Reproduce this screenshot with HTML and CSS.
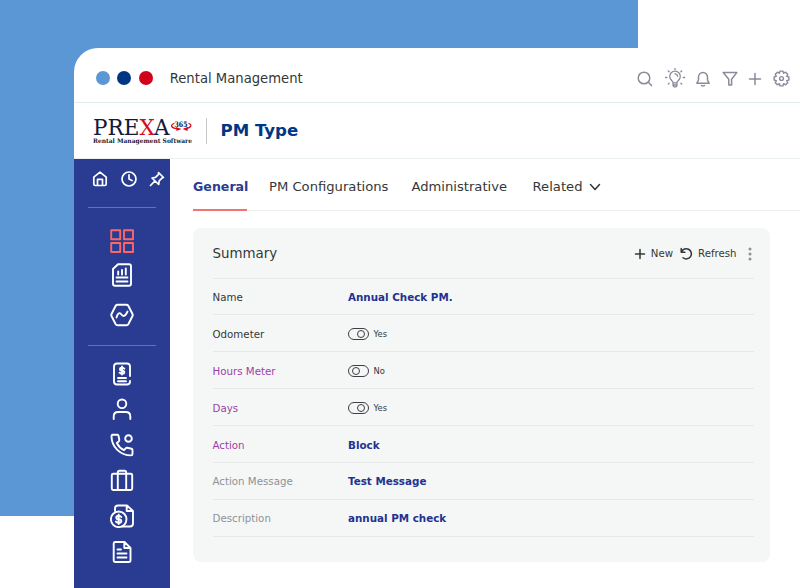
FILE: index.html
```html
<!DOCTYPE html>
<html lang="en">
<head>
    <meta charset="utf-8">
    <title>Rental Management</title>
    <link rel="stylesheet" href="styles.css">
</head>
<body>
    <div class="backdrop">
        <div class="window">
            <header class="titlebar">
                <div class="dots">
                    <span class="dot dot-light"></span>
                    <span class="dot dot-navy"></span>
                    <span class="dot dot-red"></span>
                </div>
                <span class="app-name">Rental Management</span>
                <div class="tools">
                    <svg width="16" height="16" viewBox="0 0 16 16"><circle cx="7" cy="7" r="5.8"/><path d="M11.3 11.3l3.2 3.3"/></svg>
                    <svg class="bulb" width="20" height="20" viewBox="0 0 20 20"><path d="M8 14.8c0-2-3.3-3-3.3-6.300a5.300 5.300 0 0 1 10.600 0c0 3.300-3.300 4.300-3.300 6.300zM8 15v2.500l1 1.300h2l1-1.300V15M8 17h4M10 5.800a2.700 2.700 0 0 1 2.500 2.500M10 .5v1M3.300 3l.8.8M16.700 3l-.8.8M.5 9.500h1.300M18.200 9.500h1.300M3.300 16l.8-.8M16.700 16l-.8-.8"/></svg>
                    <svg width="16" height="16" viewBox="0 0 16 16"><path d="M1.800 12.300h12.400L12.500 9V6a4.500 4.500 0 0 0-9 0v3zM6.500 14.500q1.500 1 3 0"/></svg>
                    <svg width="16" height="16" viewBox="0 0 16 16"><path d="M1.200 1.600h13.600L9.600 8.200V14H6.800V8.200z"/></svg>
                    <svg width="14" height="14" viewBox="0 0 14 14"><path d="M7 1.500v11M1.500 7h11"/></svg>
                    <svg width="17" height="17" viewBox="0 0 18 18"><path d="M7.400 1.200h3.200l.6 2.200 2.100-1.100 2.300 2.300-1.100 2.100 2.300.7v3.200l-2.300.6 1.100 2.200-2.300 2.300-2.100-1.200-.6 2.300H7.400l-.6-2.300-2.100 1.200-2.300-2.300 1.100-2.200-2.300-.6V7.400l2.300-.7-1.100-2.100 2.300-2.300 2.100 1.100z"/><circle cx="9" cy="9" r="2"/></svg>
                </div>
            </header>

            <div class="brandbar">
                <svg class="logo" width="100" height="38" viewBox="0 -5 100 38">
                    <text class="logo-name" x="0" y="18" textLength="76.500" lengthAdjust="spacingAndGlyphs">PRE<tspan class="logo-x">X</tspan>A</text>
                    <text class="logo-365" x="81.500" y="9.500" textLength="13" lengthAdjust="spacingAndGlyphs">365</text>
                    <path class="logo-swoosh" d="M81 6.500c-4 1.500-3 4.500 3 5.200M96 6.500c3.500 1.500 2 4.500-4 5.200"/>
                    <path class="logo-arrow" d="M83 10l5.500 2-5 1.900zM95 10l-5.500 2 5 1.900z"/>
                    <text class="logo-tag" x="0" y="26.300" textLength="99" lengthAdjust="spacingAndGlyphs">Rental Management Software</text>
                </svg>
                <h1>PM Type</h1>
            </div>

            <div class="main">
                <nav class="sidebar">
                    <div class="shortcuts">
                        <svg width="16" height="16" viewBox="0 0 16 16"><path d="M1.800 6.200L8 1.200l6.200 5V13q0 1.500-1.500 1.500H3.300q-1.500 0-1.500-1.500zM5.500 14.500V8.300h5v6.200"/></svg>
                        <svg width="16" height="16" viewBox="0 0 16 16"><circle cx="8" cy="8" r="7"/><path d="M8 3.800V8l3 1.500"/></svg>
                        <svg width="16" height="16" viewBox="0 0 16 16"><path d="M9.500 1.500l5 5-1.300.3-3 3-.5 3.700L3 7l3.500-.6 3-3zM5.800 10.200L1.500 14.500"/></svg>
                    </div>
                    <div class="nav-group">
                        <svg class="active" width="24" height="24" viewBox="0 0 24 24"><path d="M1.200 1.200h9v9h-9zM14 1.200h9v9h-9zM1.200 14h9v9h-9zM14 14h9v9h-9z"/></svg>
                        <svg width="24" height="24" viewBox="0 0 24 24"><path d="M8 1.200h11q2 0 2 2v17.600q0 2-2 2H5q-2 0-2-2V6zM6.500 14.500h11M6.500 18.500h11M8.200 11.500v-3M12 11.500V7M15.800 11.500V5.500"/></svg>
                        <svg class="trend" width="24" height="24" viewBox="0 0 24 24"><path d="M7.500 1.700h9q1.200 0 1.800 1l4.200 8.300q.5 1 0 2l-4.200 8.300q-.6 1-1.800 1h-9q-1.200 0-1.800-1L1.500 13q-.5-1 0-2l4.200-8.300q.6-1 1.800-1zM6.500 14.500c1-4 3-5.500 4.500-3.500s3.500 4 6.500-2.500"/></svg>
                    </div>
                    <div class="nav-group nav-more">
                        <svg width="24" height="24" viewBox="0 0 24 24"><path d="M20 14V4.500q0-3-3-3H7q-3 0-3 3v15q0 3 3 3h10q3 0 3-3V19M8 16h8M8 19.200h8M12 4.500v8M14.300 6.700q-1-1-2.300-1-2 0-2 1.500T12 8.700q2.300 0 2.300 1.600T12 11.700q-1.500 0-2.500-1"/></svg>
                        <svg width="24" height="24" viewBox="0 0 24 24"><circle cx="12" cy="5.800" r="4.300"/><path d="M3.700 21v-2.500q0-4.500 4.500-4.500h7.600q4.500 0 4.500 4.500V21"/></svg>
                        <svg width="24" height="24" viewBox="0 0 24 24"><path d="M2.500 1.800h4.800q1 0 1.200 1l.8 4q.2 1-.6 1.600L6.800 10q2.500 5 7.200 7.200l1.700-1.900q.6-.7 1.500-.5l4.300.9q1 .2 1 1.200v4q0 1.500-1.500 1.500C10.500 22.400 1.500 14 1.500 3.200q0-1.200 1-1.400z"/><circle cx="18.500" cy="5.500" r="3.300"/></svg>
                        <svg width="24" height="24" viewBox="0 0 24 24"><rect x="1.800" y="4.800" width="20.400" height="16.200" rx="1.500"/><path d="M7.800 21V3.500q0-1.700 1.700-1.700h5q1.700 0 1.700 1.700V21"/></svg>
                        <svg width="24" height="24" viewBox="0 0 24 24"><circle cx="8.700" cy="15.300" r="7.800"/><path d="M5 7V4.500q0-3 3-3h9l6 5.500v12.500q0 3-3 3h-8M16.700 1.500V7H23M8.700 10.500v9.500M11.300 13q-1-1.200-2.600-1.200-2.400 0-2.400 1.800t2.400 1.700 2.600 1.700-2.600 1.800q-1.800 0-2.700-1.200"/></svg>
                        <svg width="24" height="24" viewBox="0 0 24 24"><path d="M5 2h9.500L20.500 8v12.200q0 1.800-1.800 1.800H5.500q-1.800 0-1.800-1.800V4q0-2 1.500-2zM14.300 2V8h6.200M7.500 9.500h3.500M7.500 13.500h9M7.500 17.500h9"/></svg>
                    </div>
                </nav>

                <div class="content">
                    <div class="tabs">
                        <a class="tab tab-active">General</a>
                        <a class="tab">PM Configurations</a>
                        <a class="tab">Administrative</a>
                        <a class="tab">Related <svg width="12" height="8" viewBox="0 0 12 8"><path d="M1.500 1.500L6 6.500l4.500-5"/></svg></a>
                    </div>

                    <section class="card">
                        <div class="card-header">
                            <h2>Summary</h2>
                            <svg width="12" height="12" viewBox="0 0 12 12"><path d="M6 1.500v9M1.500 6h9"/></svg>
                            <span class="act-new">New</span>
                            <svg width="13" height="13" viewBox="0 0 13 13"><path d="M1.200 1.500v3.700h3.700M1.500 5A5.100 5.100 0 1 1 3 10.700"/></svg>
                            <span class="act-refresh">Refresh</span>
                            <svg class="kebab" width="4" height="14" viewBox="0 0 4 14"><circle cx="2" cy="2" r="1.500"/><circle cx="2" cy="7" r="1.500"/><circle cx="2" cy="12" r="1.500"/></svg>
                        </div>
                        <div class="row">
                            <span class="label">Name</span>
                            <span class="value">Annual Check PM.</span>
                        </div>
                        <div class="row">
                            <span class="label">Odometer</span>
                            <span class="toggle on"></span><span class="state">Yes</span>
                        </div>
                        <div class="row">
                            <span class="label purple">Hours Meter</span>
                            <span class="toggle"></span><span class="state">No</span>
                        </div>
                        <div class="row">
                            <span class="label purple">Days</span>
                            <span class="toggle on"></span><span class="state">Yes</span>
                        </div>
                        <div class="row">
                            <span class="label purple">Action</span>
                            <span class="value">Block</span>
                        </div>
                        <div class="row">
                            <span class="label gray">Action Message</span>
                            <span class="value">Test Message</span>
                        </div>
                        <div class="row">
                            <span class="label gray">Description</span>
                            <span class="value">annual PM check</span>
                        </div>
                    </section>
                </div>
            </div>
        </div>
    </div>
</body>
</html>
```
FILE: styles.css
```css
* {
    box-sizing: border-box;
}

body {
    margin: 0;
    height: 588px;
    overflow: hidden;
    background: #fff;
    font-family: "DejaVu Sans", sans-serif;
    color: #333739;
}

svg {
    display: block;
    flex: none;
    fill: none;
    stroke: currentColor;
    stroke-width: 1.5;
    stroke-linecap: round;
    stroke-linejoin: round;
}

.backdrop {
    width: 800px;
    height: 588px;
    padding: 47.5px 0 0 73.5px;
    background: linear-gradient(#5b97d5, #5b97d5) no-repeat 0 0 / 638px 516px;
}

.window {
    height: 540.5px;
    display: flex;
    flex-direction: column;
    background: #fff;
    border-radius: 24px 0 0 0;
    overflow: hidden;
}

.titlebar {
    height: 55.5px;
    display: flex;
    align-items: center;
    padding: 6px 10.5px 0 22px;
    border-bottom: 1.5px solid #e5eeee;
}

.dots {
    display: flex;
    gap: 7.6px;
}

.dot {
    width: 14px;
    height: 14px;
    border-radius: 50%;
}

.dot-light {
    background: #5b97d5;
}

.dot-navy {
    background: #003784;
}

.dot-red {
    background: #d0021b;
}

.app-name {
    margin-left: 17px;
    padding-top: 1px;
    font-size: 13.2px;
}

.tools {
    margin: 2px 0 0 auto;
    display: flex;
    align-items: center;
    gap: 10.5px;
    color: #8b8a9a;
}

.tools .bulb {
    margin: 0 0 2px 1px;
    stroke-width: 1.3;
}

.brandbar {
    height: 56px;
    display: flex;
    align-items: center;
    padding-left: 19px;
    border-bottom: 1.5px solid #e9eeee;
}

.logo text {
    stroke: none;
    font-family: "DejaVu Serif", serif;
    fill: #14193b;
}

.logo .logo-name {
    font-size: 22px;
}

.logo .logo-x {
    fill: #d80a20;
}

.logo .logo-365 {
    font-size: 7.5px;
    font-weight: bold;
}

.logo .logo-tag {
    font-size: 6.3px;
    font-weight: bold;
}

.logo-swoosh {
    stroke: #d80a20;
    stroke-width: 1.3;
}

.logo-arrow {
    fill: #d80a20;
    stroke: none;
}

h1 {
    margin: 0 0 0 13px;
    padding-left: 14px;
    border-left: 1px solid #c4c8ca;
    font-size: 16.6px;
    line-height: 26px;
    color: #003784;
}

.main {
    flex: 1;
    display: flex;
}

.sidebar {
    width: 96.5px;
    padding: 0 14px;
    background: #293c92;
    color: #fff;
}

.shortcuts {
    height: 48px;
    margin-right: -7px;
    padding: 12px 0 0 4.5px;
    display: flex;
    gap: 12.5px;
}

.shortcuts svg {
    stroke-width: 1.7;
}

.nav-group {
    height: 138px;
    padding-top: 21px;
    border-top: 1px solid #6372b2;
    display: flex;
    flex-direction: column;
    align-items: center;
    gap: 13px;
}

.nav-group svg {
    stroke-width: 1.9;
}

.nav-group .active {
    color: #fb6767;
    margin-bottom: -3px;
}

.nav-group .trend {
    margin-top: 2.5px;
}

.nav-more {
    height: auto;
    padding-top: 16px;
    gap: 11.6px;
}

.content {
    flex: 1;
    min-width: 0;
}

.tabs {
    height: 52px;
    margin-left: 23px;
    display: flex;
    border-bottom: 1.5px solid #edf0f0;
    font-size: 13.15px;
    white-space: nowrap;
}

.tab {
    display: flex;
    align-items: center;
    gap: 7px;
    height: 52px;
    margin-right: 23px;
    padding-top: 5px;
    border-bottom: 2px solid transparent;
}

.tab-active {
    width: 54px;
    margin-right: 22px;
    color: #293c92;
    font-weight: bold;
    font-size: 12.6px;
    border-color: #f27370;
}

.tab:nth-child(3) {
    margin-right: 25.5px;
}

.card {
    width: 577px;
    height: 334px;
    margin: 17px 0 0 23px;
    padding: 0 16px 0 19.5px;
    background: #f5f7f6;
    border-radius: 8px;
}

.card-header {
    height: 50.5px;
    display: flex;
    align-items: center;
    padding-top: 2px;
    border-bottom: 1.5px solid #e7e9e9;
    font-size: 10.2px;
}

h2 {
    margin: 0 auto 0 0;
    font-size: 13.4px;
    font-weight: normal;
}

.act-new {
    margin: 0 7px 0 5px;
}

.act-refresh {
    margin: 0 11px 0 5px;
}

.kebab {
    color: #8f8e9c;
    fill: currentColor;
    stroke: none;
    margin-right: 2.5px;
}

.row {
    height: 36.9px;
    display: flex;
    align-items: center;
    padding-top: 1px;
    border-bottom: 1.5px solid #e7e9e9;
    font-size: 10.25px;
}

.label {
    width: 135.5px;
}

.purple {
    color: #9b3fa8;
}

.gray {
    color: #8e9199;
}

.value {
    font-weight: bold;
    color: #233290;
    font-size: 10.35px;
}

.toggle {
    width: 21px;
    height: 12px;
    display: flex;
    align-items: center;
    padding: 0 3px;
    border: 1.2px solid #3c4046;
    border-radius: 6px;
}

.toggle::before {
    content: "";
    width: 6px;
    height: 6px;
    border: 1.2px solid #3c4046;
    border-radius: 50%;
}

.toggle.on {
    justify-content: flex-end;
}

.state {
    margin-left: 4.5px;
    font-size: 8.4px;
}
```
